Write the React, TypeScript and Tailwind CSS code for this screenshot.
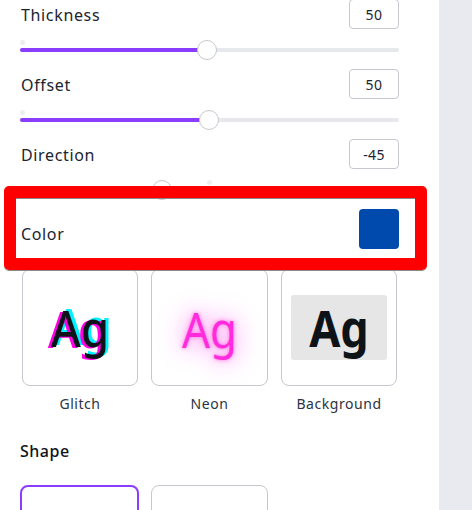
const labelClass = 'relative top-[1px] pl-[1px] text-[16px] tracking-[0.65px] text-[#1c2430]';
const inputClass =
  'flex h-[30px] w-[50px] items-center justify-center rounded-[4px] border border-[#c5c8cf] text-[14px] tracking-[0.4px] text-[#1c2430]';

function SliderRow({ label, value, percent }: { label: string; value: string; percent: number }) {
  return (
    <div className="h-[70px]">
      <div className="flex h-[30px] items-center justify-between">
        <span className={labelClass}>{label}</span>
        <div className={inputClass}>{value}</div>
      </div>
      <div className="relative mt-[19px] h-[3.5px] rounded-full bg-[#e6e8eb]">
        <div className="h-[3.5px] rounded-full bg-[#8b3dff]" style={{ width: `${percent}px` }} />
        <div
          className="absolute top-[-8.5px] h-[20px] w-[20px] rounded-full border border-[#c5c8cf] bg-white"
          style={{ left: `${percent - 10}px` }}
        />
        <div className="absolute left-0 top-[-8px] h-[5px] w-[5px] rounded-full bg-[#eceef0]" />
      </div>
    </div>
  );
}

function EffectCard({ label, width, children }: { label: string; width: string; children: React.ReactNode }) {
  return (
    <div className={`flex flex-col items-center ${width}`}>
      <div className="flex h-[117px] w-full items-center justify-center rounded-[8px] border border-[#c5c8cf] bg-white">
        {children}
      </div>
      <span className="mt-[8px] text-[14px] leading-[20px] tracking-[0.55px] text-[#2b3340]">{label}</span>
    </div>
  );
}

export default function App() {
  return (
    <div className='relative flex h-[510px] w-[472px] overflow-hidden bg-[#e9eaef] font-["Noto_Sans","Liberation_Sans",sans-serif]'>
      <div className="h-full w-[439px] bg-white pl-[20px] pr-[40px]">
        <div className="-mt-[1px]">
          <SliderRow label="Thickness" value="50" percent={187} />
          <SliderRow label="Offset" value="50" percent={189} />
          <div className="h-[70px]">
            <div className="flex h-[30px] items-center justify-between">
              <span className={labelClass}>Direction</span>
              <div className={inputClass}>-45</div>
            </div>
            <div className="relative mt-[19px] h-[3.5px]">
              <div className="absolute left-[132px] top-[-8.5px] h-[20px] w-[20px] rounded-full border border-[#c5c8cf] bg-white" />
              <div className="absolute left-[187px] top-[-8px] h-[5px] w-[5px] rounded-full bg-[#eceef0]" />
            </div>
          </div>
          <div className="flex h-[40px] items-center justify-between">
            <span className={`${labelClass} top-[5px]`}>Color</span>
            <div className="h-[40px] w-[40px] rounded-[4px] bg-[#004aad]" />
          </div>
        </div>

        <div className="mt-[20px] flex pl-[2px]">
          <EffectCard label="Glitch" width="w-[116px]">
            <span className="-mt-[1px] scale-y-[1.12] text-[46px] font-medium leading-none text-[#0e1318] [text-shadow:-3px_1px_0_#ff00e6,3px_-2px_0_#00f0ff]">
              Ag
            </span>
          </EffectCard>
          <div className="ml-[13px]">
            <EffectCard label="Neon" width="w-[117px]">
              <span className="mt-[3px] scale-y-[1.12] text-[44px] font-normal leading-none text-[#ff2bdc] [text-shadow:0_0_4px_#ff6be6,0_0_18px_#ff8cef,0_0_32px_#ffb0f4]">
                Ag
              </span>
            </EffectCard>
          </div>
          <div className="ml-[13px]">
            <EffectCard label="Background" width="w-[116px]">
              <div className="flex h-[65px] w-[96px] items-center justify-center rounded-[3px] bg-[#e6e6e6]">
                <span className="scale-y-[1.1] text-[45px] font-bold leading-none text-[#0e1318]">Ag</span>
              </div>
            </EffectCard>
          </div>
        </div>

        <p className="mt-[25px] text-[16px] font-medium leading-[24px] tracking-[0.5px] text-[#0e1318]">Shape</p>
        <div className="mt-[22px] flex">
          <div className="h-[117px] w-[119px] rounded-[8px] border-2 border-[#8b3dff] bg-white" />
          <div className="ml-[12px] h-[117px] w-[117px] rounded-[8px] border border-[#c5c8cf] bg-white" />
        </div>
      </div>

      {/* annotation drawn over the panel */}
      <div className="absolute left-[4px] top-[186px] h-[84px] w-[423px] rounded-[5px] border-[12px] border-[#ff0000] shadow-[inset_0_1px_0_#8a8a8a,0_1px_0_#8a8a8a]" />
    </div>
  );
}
